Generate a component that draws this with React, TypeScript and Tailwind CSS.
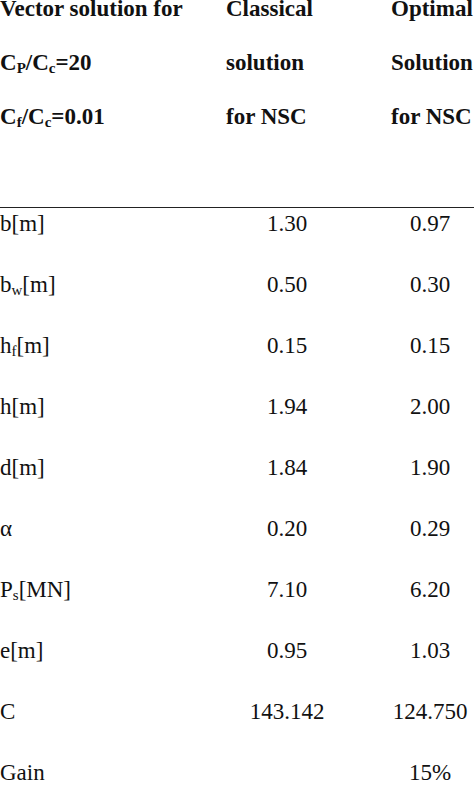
import type { ReactNode } from "react";

type Row = readonly [ReactNode, string, string];

const Sub = ({ children }: { children: ReactNode }) => (
  <span className="relative top-[3px] text-[15px] leading-none">{children}</span>
);

const rows: readonly Row[] = [
  ["b[m]", "1.30", "0.97"],
  [<>b<Sub>w</Sub>[m]</>, "0.50", "0.30"],
  [<>h<Sub>f</Sub>[m]</>, "0.15", "0.15"],
  ["h[m]", "1.94", "2.00"],
  ["d[m]", "1.84", "1.90"],
  ["α", "0.20", "0.29"],
  [<>P<Sub>s</Sub>[MN]</>, "7.10", "6.20"],
  ["e[m]", "0.95", "1.03"],
  ["C", "143.142", "124.750"],
  ["Gain", "", "15%"],
];

function HeaderCell({ lines }: { lines: ReactNode[] }) {
  return (
    <div className="-mt-[3px] flex flex-col gap-[30px] whitespace-nowrap font-bold">
      {lines.map((l, i) => (
        <div key={i}>{l}</div>
      ))}
    </div>
  );
}

export default function App() {
  return (
    <div className="h-[786px] w-[474px] overflow-hidden bg-white font-['Liberation_Serif','Times_New_Roman',serif] text-[23px] leading-[24px] text-[#111]">
      <div className="w-[520px]">
        <div className="grid h-[208px] grid-cols-[226px_165px_1fr] border-b-[1.5px] border-[#222]">
          <HeaderCell
            lines={[
              "Vector solution for",
              <>C<Sub>P</Sub>/C<Sub>c</Sub>=20</>,
              <>C<Sub>f</Sub>/C<Sub>c</Sub>=0.01</>,
            ]}
          />
          <HeaderCell lines={["Classical", "solution", "for NSC"]} />
          <HeaderCell lines={["Optimal", "Solution", "for NSC"]} />
        </div>
        <div className="flex flex-col gap-[37px] pt-[4px]">
          {rows.map(([label, a, b], i) => (
            <div key={i} className="grid grid-cols-[226px_165px_1fr] whitespace-nowrap">
              <div>{label}</div>
              <div className="w-[122px] text-center">{a}</div>
              <div className="w-[78px] text-center">{b}</div>
            </div>
          ))}
        </div>
      </div>
    </div>
  );
}
